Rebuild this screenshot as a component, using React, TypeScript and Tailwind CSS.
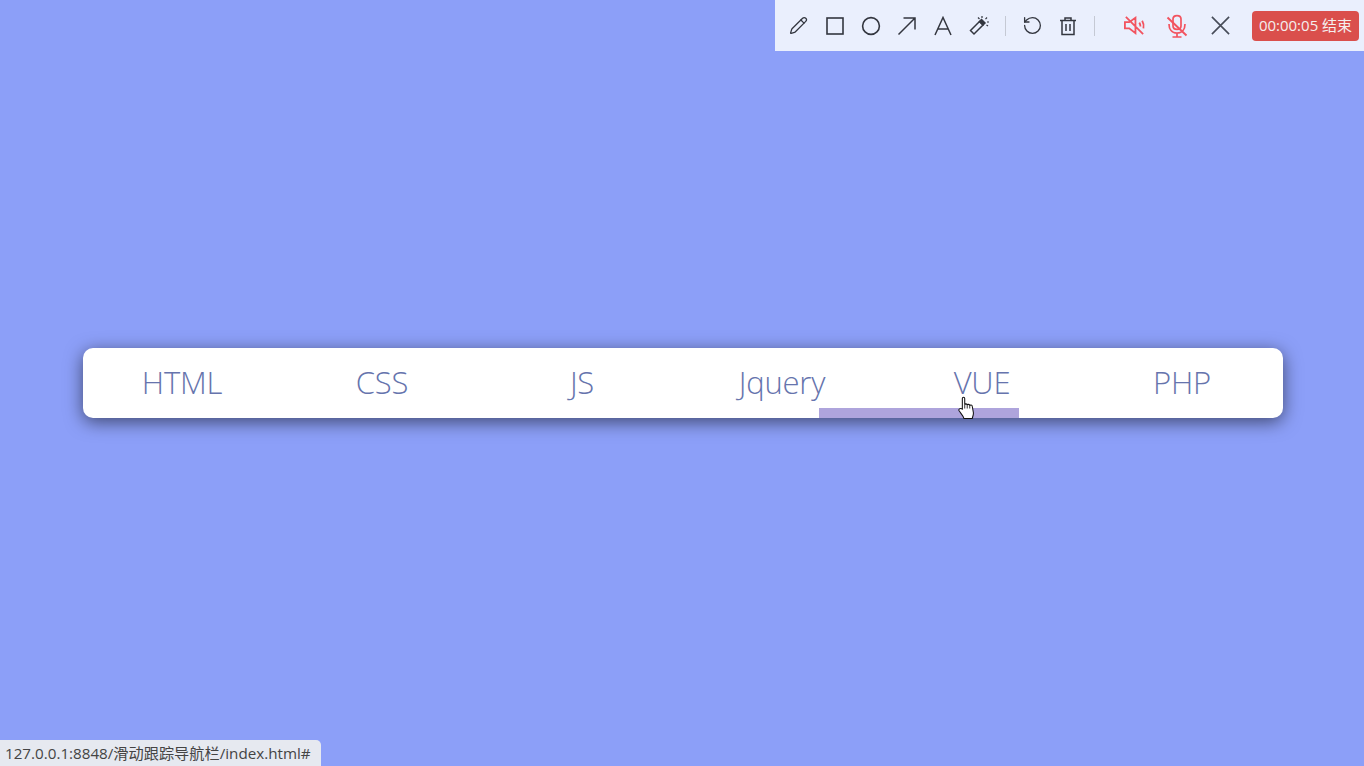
import { Pencil, RotateCcw } from 'lucide-react';

const links = ['HTML', 'CSS', 'JS', 'Jquery', 'VUE', 'PHP'];

const HandCursor = () => (
  <svg width="17" height="24" viewBox="0 0 16 23" className="absolute left-[875px] top-[48px]">
    <path
      d="M4 12.5 L4 2.5 C4 .8 6.3 .8 6.3 2.5 L6.3 8.5 C6.5 7.2 8.6 7.2 8.7 8.8 C9 7.6 11 7.8 11.1 9.3 C11.5 8.3 13.5 8.5 13.6 10.2 L14.6 16 C14.8 18 14 19.5 13.5 21.5 L5.5 21.5 C5 19 2.8 17 .9 14.2 C.2 13 1.5 11.2 4 12.5 Z"
      fill="#fff"
      stroke="#111"
      strokeWidth="1"
    />
    <path d="M6.3 8.5 V12 M8.7 8.8 V12 M11.1 9.3 V12" stroke="#111" strokeWidth="0.8" fill="none" />
  </svg>
);

export default function App() {
  return (
    <div className="relative flex h-[766px] items-center justify-center overflow-hidden bg-[#8c9ff8] pl-[2px] font-['Open_Sans',sans-serif]">
      {/* Nav */}
      <nav className="relative flex h-[70px] w-[1200px] rounded-[10px] bg-white shadow-[0_4px_18px_rgba(0,0,0,0.55)]">
        {links.map((link) => (
          <a
            key={link}
            href="#"
            className="flex w-[200px] items-center justify-center pb-[2px] pr-[2px] text-[31px] font-light tracking-[-0.2px] text-[#6674ad]"
          >
            {link}
          </a>
        ))}
        <div className="absolute bottom-0 left-[736px] h-[10px] w-[200px] bg-[#aea4dc]" />
        <HandCursor />
      </nav>

      {/* Recorder toolbar */}
      <div className="absolute right-0 top-0 flex h-[51px] w-[589px] items-center bg-[#eaeffd] pl-[14px] text-[#33363f]">
        <div className="flex w-[216px] items-center">
          <span className="flex w-[36px]">
            <Pencil size={19} strokeWidth={1.6} />
          </span>
          <span className="flex w-[36px] pl-[1px]">
            <svg width="18" height="18" viewBox="0 0 18 18" fill="none" stroke="currentColor" strokeWidth="1.6">
              <rect x="1" y="1" width="16" height="16" />
            </svg>
          </span>
          <span className="flex w-[36px]">
            <svg width="20" height="20" viewBox="0 0 20 20" fill="none" stroke="currentColor" strokeWidth="1.6">
              <circle cx="10" cy="10" r="8.4" />
            </svg>
          </span>
          <span className="flex w-[36px]">
            <svg width="20" height="20" viewBox="0 0 20 20" fill="none" stroke="currentColor" strokeWidth="1.5">
              <path d="M1.5 18.5 L18 2 M6.5 2 H18 V13.5" />
            </svg>
          </span>
          <span className="flex w-[36px]">
            <svg width="20" height="20" viewBox="0 0 20 20" fill="none" stroke="currentColor" strokeWidth="1.5">
              <path d="M2 19 L10 1.5 L18 19 M5 13 H15" />
            </svg>
          </span>
          <span className="flex w-[36px]">
            <svg width="21" height="21" viewBox="0 0 21 21" fill="none" stroke="currentColor" strokeWidth="1.5">
              <path d="M1.5 15.5 L10.5 6.5 L14 10 L5 19 Z" />
              <path d="M10.5 6.5 L12.5 4.5 L16 8 L14 10 Z" fill="currentColor" />
              <path d="M13 1 V3 M18 2.5 L16.5 4.2 M20 7 H18 M19 11 L17.5 10 M9 2.5 L10.5 4" strokeWidth="1.2" />
            </svg>
          </span>
        </div>
        <div className="mr-[16px] h-[20px] w-px bg-[#c5c9d4]" />
        <span className="flex w-[36px]">
          <RotateCcw size={21} strokeWidth={1.5} />
        </span>
        <span className="flex w-[36px]">
          <svg width="20" height="20" viewBox="0 0 20 20" fill="none" stroke="currentColor" strokeWidth="1.5">
            <path d="M2 4.5 H18 M7 4.5 V2 H13 V4.5 M4 4.5 V18.5 H16 V4.5 M8 8 V15 M12 8 V15" />
          </svg>
        </span>
        <div className="mr-[28px] h-[20px] w-px bg-[#c5c9d4]" />
        <span className="flex w-[43px] text-[#f2535f]">
          <svg width="23" height="23" viewBox="0 0 24 24" fill="none" stroke="currentColor" strokeWidth="1.9">
            <path d="M2 8.5 V15 H6.5 L13 20 V4 L6.5 8.5 Z M3 3 L21 21 M17 9 C18 10.5 18.3 11.5 18.2 13 M20 7 C21.5 9.5 22 12 21.3 15" />
          </svg>
        </span>
        <span className="flex w-[44px] text-[#f2535f]">
          <svg width="22" height="24" viewBox="0 0 22 24" fill="none" stroke="currentColor" strokeWidth="1.7">
            <path d="M7 12 V5 C7 .5 15 .5 15 5 V12 C15 16.5 7 16.5 7 12 Z M3 10 C3 14 5 19 11 19 C17 19 19 14 19 10 M11 19 V23 M6.5 23 H15.5" />
            <path d="M1.5 3.5 L20.5 21.5" strokeWidth="1.9" />
          </svg>
        </span>
        <span className="flex w-[42px]">
          <svg width="21" height="21" viewBox="0 0 22 22" fill="none" stroke="#474c58" strokeWidth="1.7">
            <path d="M2 2 L20 20 M20 2 L2 20" />
          </svg>
        </span>
        <div className="flex h-[30px] w-[107px] items-center justify-center rounded-[4px] bg-[#da4f4c] font-['Open_Sans','Noto_Sans_CJK_SC',sans-serif] text-[15px] text-[#f4eeee]">
          00:00:05 结束
        </div>
      </div>

      {/* Link status bubble */}
      <div className="absolute bottom-0 left-0 flex h-[26px] w-[321px] items-center rounded-tr-[5px] bg-[#e6e9f0] pl-[5px] font-['Open_Sans','Noto_Sans_CJK_SC',sans-serif] text-[15.2px] text-[#444]">
        127.0.0.1:8848/滑动跟踪导航栏/index.html#
      </div>
    </div>
  );
}
